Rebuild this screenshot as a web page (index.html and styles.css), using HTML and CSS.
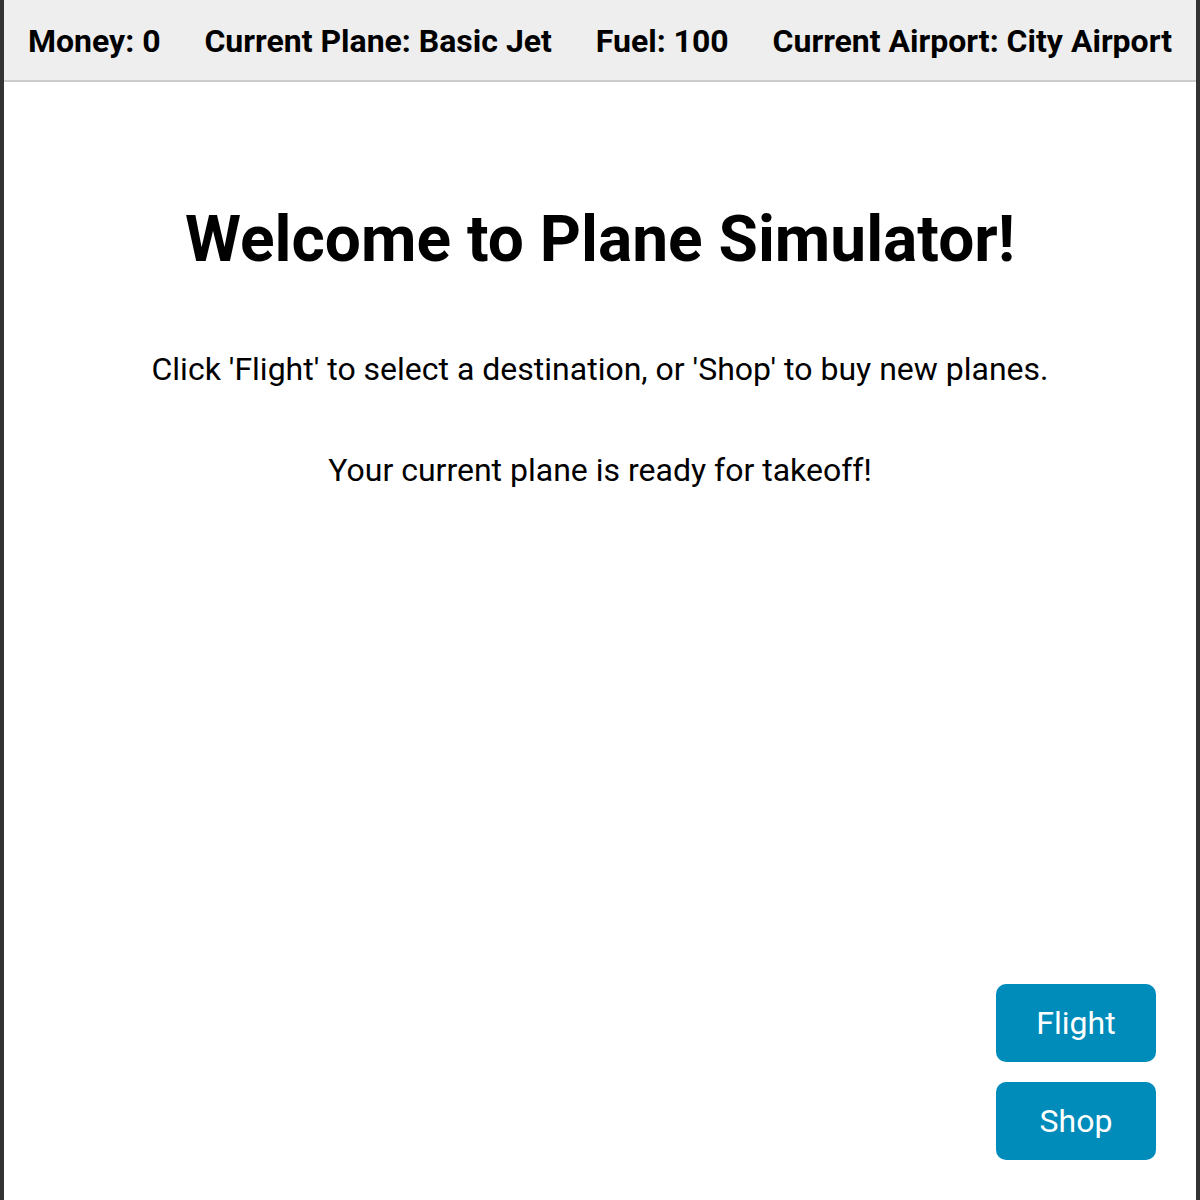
FILE: index.html
```html
<!DOCTYPE html>
<html lang="en">
<head>
<meta charset="utf-8">
<title>Plane Simulator</title>
<link rel="stylesheet" href="styles.css">
</head>
<body>
<div class="page">
  <header class="status-bar">
    <span class="stat">Money: 0</span>
    <span class="stat">Current Plane: Basic Jet</span>
    <span class="stat">Fuel: 100</span>
    <span class="stat">Current Airport: City Airport</span>
  </header>
  <main class="content">
    <h1 class="title">Welcome to Plane Simulator!</h1>
    <p class="text">Click 'Flight' to select a destination, or 'Shop' to buy new planes.</p>
    <p class="text">Your current plane is ready for takeoff!</p>
  </main>
  <div class="actions">
    <button class="btn">Flight</button>
    <button class="btn">Shop</button>
  </div>
</div>
</body>
</html>
```
FILE: styles.css
```css
* { box-sizing: border-box; }
html, body {
  margin: 0;
  padding: 0;
  background: #fff;
}
body {
  font-family: Roboto, "Liberation Sans", sans-serif;
  font-size: 32px;
  color: #000;
}
.page {
  min-height: 100vh;
  border-left: 4px solid #333;
  border-right: 4px solid #333;
  display: flex;
  flex-direction: column;
}
.status-bar {
  display: flex;
  justify-content: space-between;
  align-items: center;
  height: 82px;
  padding: 2px 24px 0;
  background: #eee;
  border-bottom: 2px solid #ccc;
  font-weight: 700;
}
.stat {
  white-space: nowrap;
}
.content {
  display: flex;
  flex-direction: column;
  align-items: center;
  padding-top: 77px;
  text-align: center;
}
.title {
  font-size: 64px;
  font-weight: 700;
  margin: 43px 0 41px;
}
.text {
  margin: 32px 0;
}
.text + .text {
  margin-top: 31px;
}
.actions {
  margin-top: auto;
  align-self: flex-end;
  display: flex;
  flex-direction: column;
  gap: 20px;
  padding: 0 40px 40px 0;
}
.btn {
  width: 160px;
  padding: 20px 0;
  border: none;
  border-radius: 10px;
  background: #008cba;
  color: #fff;
  font-family: Roboto, "Liberation Sans", sans-serif;
  font-size: 32px;
  line-height: normal;
}
```
